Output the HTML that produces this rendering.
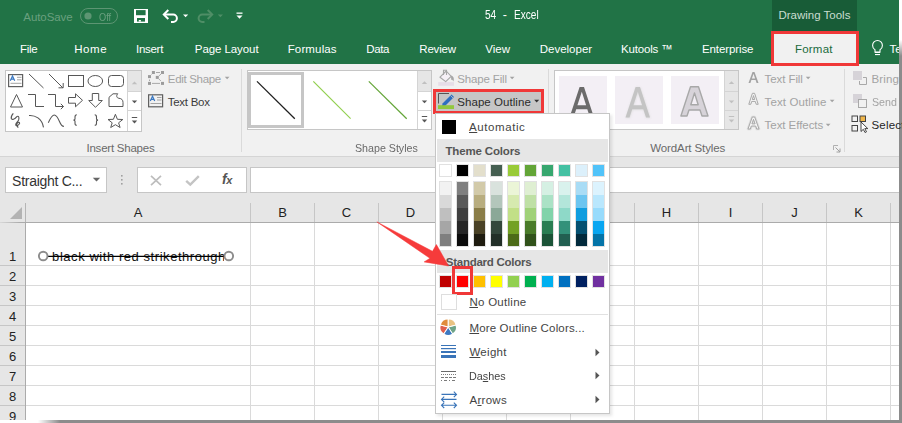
<!DOCTYPE html>
<html><head><meta charset="utf-8"><style>
html,body{margin:0;padding:0;width:902px;height:423px;overflow:hidden;background:#fff}
body{position:relative;font-family:"Liberation Sans",sans-serif}
.t{position:absolute;white-space:nowrap}
svg{overflow:visible}
</style></head><body>
<div style="position:absolute;left:0px;top:0px;width:902px;height:64px;background:#217346"></div>
<div style="position:absolute;left:0px;top:64px;width:899px;height:92px;background:#f1f1f1"></div>
<div style="position:absolute;left:772px;top:0px;width:85px;height:31px;background:#185c37"></div>
<div class="t" style="left:23.30px;top:12.00px;font-size:11.5px;line-height:11.5px;color:#6aa07f;letter-spacing:-0.071px;font-weight:400;">AutoSave</div>
<svg style="position:absolute;left:80px;top:8px;" width="38" height="16" viewBox="0 0 38 16"><rect x="0.5" y="0.5" width="37" height="15" rx="7.5" fill="none" stroke="#5d9573" stroke-width="1"/><circle cx="8" cy="8" r="3.6" fill="#5d9573"/></svg>
<div class="t" style="left:99.00px;top:12.00px;font-size:11.5px;line-height:11.5px;color:#6aa07f;letter-spacing:0.000px;font-weight:400;transform:scaleX(0.8000);transform-origin:0.00px 0;">Off</div>
<svg style="position:absolute;left:134px;top:9px;" width="14" height="14" viewBox="0 0 14 14"><rect x="0" y="0" width="14" height="14" fill="#fff"/><rect x="2" y="1.1" width="9.6" height="5.1" fill="#217346"/><rect x="3" y="9" width="8" height="3.6" fill="#217346"/><rect x="4.8" y="11" width="2.1" height="1.6" fill="#fff"/></svg>
<svg style="position:absolute;left:160px;top:7px;" width="32" height="17" viewBox="0 0 32 17"><path d="M4.5 7.5H13.2A3.7 3.7 0 0 1 13.2 14.9H11" fill="none" stroke="#fff" stroke-width="2"/><path d="M8.3 3L3.8 7.5L8.3 12" fill="none" stroke="#fff" stroke-width="2"/><path d="M23 7.4H28.2L25.6 10.3Z" fill="#fff"/></svg>
<svg style="position:absolute;left:196px;top:7px;" width="30" height="17" viewBox="0 0 30 17"><path d="M15.5 7.5H6.3A3.7 3.7 0 0 0 6.3 14.9H8.5" fill="none" stroke="#4f8e66" stroke-width="2"/><path d="M11.7 3L16.2 7.5L11.7 12" fill="none" stroke="#4f8e66" stroke-width="2"/><path d="M21.8 7.4H27L24.4 10.3Z" fill="#4f8e66"/></svg>
<svg style="position:absolute;left:236px;top:12px;" width="8" height="8" viewBox="0 0 8 8"><rect x="0.5" y="0.5" width="6" height="1.3" fill="#fff"/><path d="M0.5 3.5H6.5L3.5 6.8Z" fill="#fff"/></svg>
<div class="t" style="left:484.80px;top:9.00px;font-size:12.5px;line-height:12.5px;color:#ffffff;letter-spacing:0.000px;font-weight:400;transform:scaleX(0.8071);transform-origin:0.00px 0;">54</div>
<div class="t" style="left:502.70px;top:9.00px;font-size:12.5px;line-height:12.5px;color:#ffffff;letter-spacing:0.000px;font-weight:400;">-</div>
<div class="t" style="left:513.70px;top:9.00px;font-size:12.5px;line-height:12.5px;color:#ffffff;letter-spacing:0.000px;font-weight:400;transform:scaleX(0.8065);transform-origin:0.00px 0;">Excel</div>
<div class="t" style="left:778.40px;top:10.00px;font-size:11.5px;line-height:11.5px;color:#c9ddd0;letter-spacing:0.000px;font-weight:400;">Drawing Tools</div>
<div class="t" style="left:20.00px;top:44.00px;font-size:11.5px;line-height:11.5px;color:#ffffff;letter-spacing:-0.267px;font-weight:400;">File</div>
<div class="t" style="left:74.20px;top:44.00px;font-size:11.5px;line-height:11.5px;color:#ffffff;letter-spacing:0.600px;font-weight:400;">Home</div>
<div class="t" style="left:136.00px;top:44.00px;font-size:11.5px;line-height:11.5px;color:#ffffff;letter-spacing:-0.280px;font-weight:400;">Insert</div>
<div class="t" style="left:194.80px;top:44.00px;font-size:11.5px;line-height:11.5px;color:#ffffff;letter-spacing:-0.080px;font-weight:400;">Page Layout</div>
<div class="t" style="left:287.70px;top:44.00px;font-size:11.5px;line-height:11.5px;color:#ffffff;letter-spacing:0.143px;font-weight:400;">Formulas</div>
<div class="t" style="left:366.30px;top:44.00px;font-size:11.5px;line-height:11.5px;color:#ffffff;letter-spacing:-0.433px;font-weight:400;">Data</div>
<div class="t" style="left:419.30px;top:44.00px;font-size:11.5px;line-height:11.5px;color:#ffffff;letter-spacing:-0.200px;font-weight:400;">Review</div>
<div class="t" style="left:485.30px;top:44.00px;font-size:11.5px;line-height:11.5px;color:#ffffff;letter-spacing:0.000px;font-weight:400;">View</div>
<div class="t" style="left:539.70px;top:44.00px;font-size:11.5px;line-height:11.5px;color:#ffffff;letter-spacing:0.000px;font-weight:400;">Developer</div>
<div class="t" style="left:621.00px;top:44.00px;font-size:11.5px;line-height:11.5px;color:#ffffff;letter-spacing:-0.175px;font-weight:400;">Kutools&nbsp;™</div>
<div class="t" style="left:702.00px;top:44.00px;font-size:11.5px;line-height:11.5px;color:#ffffff;letter-spacing:-0.111px;font-weight:400;">Enterprise</div>
<div style="position:absolute;left:772px;top:31px;width:85px;height:34px;background:#f1f1f1"></div>
<div style="position:absolute;left:771px;top:31px;width:88px;height:35px;box-sizing:border-box;border:3px solid #f03838"></div>
<div class="t" style="left:795.00px;top:44.00px;font-size:11.5px;line-height:11.5px;color:#1a6b3d;letter-spacing:0.200px;font-weight:400;">Format</div>
<svg style="position:absolute;left:872px;top:40px;" width="11" height="16" viewBox="0 0 11 16"><path d="M3 9.8C1.2 8.6 0.6 7 0.6 5.4A4.9 4.9 0 0 1 10.4 5.4C10.4 7 9.8 8.6 8 9.8V12.3H3Z" fill="none" stroke="#fff" stroke-width="1.1" stroke-linejoin="round"/><rect x="3" y="11.6" width="5" height="1.4" fill="#fff"/><rect x="3" y="14" width="5" height="1.1" fill="#fff"/></svg>
<div class="t" style="left:889.60px;top:44.00px;font-size:11.5px;line-height:11.5px;color:#ffffff;letter-spacing:0.000px;font-weight:400;">Te</div>
<div style="position:absolute;left:0px;top:156px;width:899px;height:1px;background:#d5d5d5"></div>
<div style="position:absolute;left:899px;top:0px;width:3px;height:423px;background:linear-gradient(180deg,#ffffff 0px,#ffffff 40px,#8c8c8c 56px,#8c8c8c 100%)"></div>
<div style="position:absolute;left:5px;top:70px;width:137px;height:62px;box-sizing:border-box;border:1px solid #c6c6c6;background:#fff"></div>
<div style="position:absolute;left:127px;top:71px;width:1px;height:60px;background:#d4d4d4"></div>
<div style="position:absolute;left:128px;top:71px;width:13px;height:20px;background:#e6e6e6"></div>
<div style="position:absolute;left:128px;top:91px;width:13px;height:1px;background:#d4d4d4"></div>
<div style="position:absolute;left:128px;top:110px;width:13px;height:1px;background:#d4d4d4"></div>
<svg style="position:absolute;left:128px;top:71px;" width="13" height="60" viewBox="0 0 13 60"><path d="M3.8 13.2H9.2L6.5 10.4Z" fill="#c0c0c0"/><path d="M3.8 99.5H9.2L6.5 102.3Z" transform="translate(0,-70)" fill="#575757"/><rect x="3.8" y="46" width="5.4" height="1" fill="#575757"/><path d="M3.8 49.5H9.2L6.5 52.5Z" fill="#575757"/></svg>
<svg style="position:absolute;left:0px;top:0px;" width="130" height="140" viewBox="0 0 130 140">
<rect x="8.6" y="74.6" width="14" height="12" fill="none" stroke="#606060" stroke-width="1.2"/>
<path d="M17 77.3h4.5M17 79.8h4.5M10.5 83.3h11" stroke="#9a9a9a" stroke-width="0.9"/>
<path d="M10.3 80.8L12.5 76L14.7 80.8M11.1 79.1h2.8" stroke="#3a78c2" stroke-width="1.2" fill="none"/>
<path d="M29 74L43.5 88" stroke="#575757"/>
<path d="M49 74L63 88M58.5 87.8H63.2V83" stroke="#575757" fill="none"/>
<rect x="68.5" y="75.5" width="15" height="11" fill="none" stroke="#575757"/>
<ellipse cx="95.3" cy="81" rx="7.3" ry="5.5" fill="none" stroke="#575757"/>
<rect x="108.5" y="75.5" width="15" height="11" rx="3" fill="none" stroke="#575757"/>
<path d="M10.5 107H22.5L16.5 94.5Z" fill="none" stroke="#575757" stroke-linejoin="miter"/>
<path d="M28 94.5H35.5V106.5H44" fill="none" stroke="#575757"/>
<path d="M48 94.5H55.5V106.5H63.5M60.8 103.8L63.5 106.5L60.8 109.2" fill="none" stroke="#575757"/>
<path d="M68.5 97.5H75.5V93.8L82.5 100.3L75.5 106.8V103.2H68.5Z" fill="none" stroke="#575757" stroke-linejoin="round"/>
<path d="M92.3 93.5H98.7V100.5H102.3L95.5 107.3L88.7 100.5H92.3Z" fill="none" stroke="#575757" stroke-linejoin="round"/>
<path d="M109 106.5V97.3L113 93.8H117.8C116 95.5 116.5 98 119 98.3C121.5 98.5 123 99.8 123 102.5V106.5Z" fill="none" stroke="#575757" stroke-linejoin="round"/>
<path d="M13.3 113.3C12 114.8 10.8 116.8 11.3 118.6C11.8 120 14.8 119.5 16.8 116.6C18.2 115.6 19.6 117 18.6 120C17.8 122 15.8 123 15.7 124.8C15.8 126.2 18.2 126.2 19.6 123.6C19.8 122.3 18.6 121.8 17.4 123C16.2 124.5 17.2 126.5 18.3 127.7" fill="none" stroke="#575757" stroke-width="1.1"/>
<path d="M29 115.5C35 115 42 118.5 43.5 127.3" fill="none" stroke="#575757" stroke-width="1.1"/>
<path d="M48.3 122.7C50 119 52 115 54.3 115C56.8 115 58 118 59.6 121.8C60.8 124.8 61.8 126.4 63.9 126.4" fill="none" stroke="#575757" stroke-width="1.1"/>
<path d="M76.8 114.8C75 114.8 75 115.5 75 117V119C75 119.8 74.5 120 73.5 120.1C74.5 120.2 75 120.4 75 121.2V123.2C75 124.6 75 125.3 76.8 125.3" fill="none" stroke="#575757" stroke-width="1.1"/>
<path d="M94.7 114.8C96.5 114.8 96.5 115.5 96.5 117V119C96.5 119.8 97 120 98 120.1C97 120.2 96.5 120.4 96.5 121.2V123.2C96.5 124.6 96.5 125.3 94.7 125.3" fill="none" stroke="#575757" stroke-width="1.1"/>
<path d="M115.4 114.3L117.4 119.3L122.8 119.5L118.6 122.8L120.1 127.5L115.4 124.7L110.7 127.5L112.2 122.8L108 119.5L113.4 119.3Z" fill="none" stroke="#575757" stroke-linejoin="round"/>
</svg>
<svg style="position:absolute;left:0px;top:0px;" width="170" height="90" viewBox="0 0 170 90"><rect x="151.90" y="71.00" width="3.0" height="3.0" fill="#9c9c9c"/><rect x="161.00" y="71.00" width="3.0" height="3.0" fill="#9c9c9c"/><rect x="148.00" y="75.10" width="3.0" height="3.0" fill="#9c9c9c"/><rect x="155.80" y="75.90" width="3.0" height="3.0" fill="#9c9c9c"/><rect x="148.00" y="81.90" width="3.0" height="3.0" fill="#9c9c9c"/><rect x="161.00" y="81.90" width="3.0" height="3.0" fill="#9c9c9c"/><path d="M151.5 74.5L152 74M156 72.5H160M149.5 79.5V81M152 83.4H160M161 74L158.8 76M158.8 78.9L160.8 80.9" stroke="#a8a8a8" stroke-width="1" fill="none"/></svg>
<div class="t" style="left:167.80px;top:74.00px;font-size:11.5px;line-height:11.5px;color:#a3a3a3;letter-spacing:-0.311px;font-weight:400;">Edit Shape</div>
<svg style="position:absolute;left:224px;top:76px;" width="7" height="4" viewBox="0 0 7 4"><path d="M0.8 0.8H5.5L3.15 3.3Z" fill="#a3a3a3"/></svg>
<svg style="position:absolute;left:147px;top:94px;" width="17" height="14" viewBox="0 0 17 14"><rect x="1.6" y="0.8" width="14" height="12" fill="none" stroke="#606060" stroke-width="1.2"/><path d="M10 3.5h4.5M10 6h4.5M3.5 9.5h11" stroke="#9a9a9a" stroke-width="0.9"/><path d="M3.3 7L5.5 2.2L7.7 7M4.1 5.3h2.8" stroke="#3a78c2" stroke-width="1.2" fill="none"/></svg>
<div class="t" style="left:167.80px;top:97.00px;font-size:11.5px;line-height:11.5px;color:#3b3b3b;letter-spacing:-0.286px;font-weight:400;">Text Box</div>
<div class="t" style="left:86.50px;top:143.00px;font-size:11.5px;line-height:11.5px;color:#6a6a6a;letter-spacing:-0.233px;font-weight:400;">Insert Shapes</div>
<div style="position:absolute;left:241px;top:69px;width:1px;height:83px;background:#dadada"></div>
<div style="position:absolute;left:247px;top:70px;width:185px;height:60px;box-sizing:border-box;border:1px solid #c6c6c6;background:#fff"></div>
<div style="position:absolute;left:417px;top:71px;width:1px;height:58px;background:#d4d4d4"></div>
<div style="position:absolute;left:418px;top:71px;width:13px;height:20px;background:#e6e6e6"></div>
<div style="position:absolute;left:418px;top:91px;width:13px;height:1px;background:#d4d4d4"></div>
<div style="position:absolute;left:418px;top:110px;width:13px;height:1px;background:#d4d4d4"></div>
<svg style="position:absolute;left:418px;top:71px;" width="13" height="58" viewBox="0 0 13 58"><path d="M3.8 13H9.2L6.5 10.2Z" fill="#c0c0c0"/><path d="M3.8 29.5H9.2L6.5 32.3Z" fill="#575757"/><rect x="3.8" y="45" width="5.4" height="1" fill="#575757"/><path d="M3.8 48.5H9.2L6.5 51.5Z" fill="#575757"/></svg>
<div style="position:absolute;left:248px;top:72px;width:56px;height:56px;box-sizing:border-box;border:3.5px solid #c6c6c6;background:#fff"></div>
<svg style="position:absolute;left:247px;top:70px;" width="170" height="60" viewBox="0 0 170 60"><path d="M10 11.4L47.8 48.7" stroke="#1f1f1f" stroke-width="1.3"/><path d="M66.3 11.4L103.6 48.7" stroke="#92d050" stroke-width="1.2"/><path d="M121.8 11.4L159.7 48.7" stroke="#63a537" stroke-width="1.2"/></svg>
<div class="t" style="left:355.40px;top:143.00px;font-size:11.5px;line-height:11.5px;color:#6a6a6a;letter-spacing:0.000px;font-weight:400;transform:scaleX(0.9265);transform-origin:0.00px 0;">Shape Styles</div>
<svg style="position:absolute;left:0px;top:0px;" width="460" height="90" viewBox="0 0 460 90"><rect x="438.2" y="82.1" width="15.8" height="3.7" fill="#e6dee8"/><path d="M440 77.2L446.2 71L451.2 76.4L445.7 81.6Z" fill="#f5f0f6" stroke="#a6a6a6" stroke-width="1.1" stroke-linejoin="round"/><path d="M443.5 75V70.3H446.5V75" fill="none" stroke="#a6a6a6" stroke-width="1.1"/><path d="M451 75.5C453.5 76 454.5 78 453.5 81.5C452.8 80 451.8 79.5 451.2 80Z" fill="#a6a6a6"/></svg>
<div class="t" style="left:457.30px;top:74.00px;font-size:11.5px;line-height:11.5px;color:#a3a3a3;letter-spacing:-0.156px;font-weight:400;">Shape Fill</div>
<svg style="position:absolute;left:509px;top:76px;" width="7" height="4" viewBox="0 0 7 4"><path d="M0.8 0.8H5.5L3.15 3.3Z" fill="#a3a3a3"/></svg>
<div style="position:absolute;left:433px;top:89px;width:111px;height:25px;box-sizing:border-box;border:3px solid #f03838;background:#c6c6c6"></div>
<svg style="position:absolute;left:437px;top:92px;" width="20" height="19" viewBox="0 0 20 19"><path d="M1.5 11.5V1.5H12" fill="none" stroke="#555" stroke-width="1"/><path d="M5.5 11.5L14.5 2.5L17 5L8 14L5 14.5Z" fill="#2f6fbf"/><path d="M13.5 3.5L16 6" stroke="#c6c6c6" stroke-width="0.8"/><rect x="1" y="13.2" width="16" height="3.8" fill="#92c83e"/></svg>
<div class="t" style="left:457.30px;top:97.00px;font-size:11.5px;line-height:11.5px;color:#2b2b2b;letter-spacing:0.050px;font-weight:400;">Shape Outline</div>
<svg style="position:absolute;left:533px;top:99px;" width="8" height="5" viewBox="0 0 8 5"><path d="M1.2 0.8H6.2L3.7 3.6Z" fill="#333"/></svg>
<div style="position:absolute;left:548px;top:69px;width:1px;height:83px;background:#dadada"></div>
<div style="position:absolute;left:554px;top:70px;width:185px;height:60px;box-sizing:border-box;border:1px solid #c6c6c6;background:#fff"></div>
<div style="position:absolute;left:724px;top:71px;width:1px;height:58px;background:#d4d4d4"></div>
<div style="position:absolute;left:725px;top:71px;width:13px;height:58px;background:#e6e6e6"></div>
<div style="position:absolute;left:725px;top:91px;width:13px;height:1px;background:#d4d4d4"></div>
<div style="position:absolute;left:725px;top:110px;width:13px;height:1px;background:#d4d4d4"></div>
<svg style="position:absolute;left:725px;top:71px;" width="13" height="58" viewBox="0 0 13 58"><path d="M3.8 13H9.2L6.5 10.2Z" fill="#c0c0c0"/><path d="M3.8 29.5H9.2L6.5 32.3Z" fill="#c0c0c0"/><rect x="3.8" y="45" width="5.4" height="1" fill="#c0c0c0"/><path d="M3.8 48.5H9.2L6.5 51.5Z" fill="#c0c0c0"/></svg>
<div style="position:absolute;left:559px;top:76px;width:48px;height:48px;background:#f3eff5"></div>
<div style="position:absolute;left:615px;top:76px;width:48px;height:48px;background:#f3eff5"></div>
<div style="position:absolute;left:671px;top:76px;width:48px;height:48px;background:#f3eff5"></div>
<svg style="position:absolute;left:559px;top:76px" width="48" height="48" viewBox="0 0 48 48"><path d="M10.5 41.5L20.6 11H25L35 41.5H31L28.3 33.2H17.2L14.5 41.5Z M18.4 29.3H27.1L22.8 15.8Z" fill="#6b6b6b" fill-rule="evenodd"/></svg>
<svg style="position:absolute;left:615px;top:76px" width="48" height="48" viewBox="0 0 48 48"><path d="M10.5 41.5L20.6 11H25L35 41.5H31L28.3 33.2H17.2L14.5 41.5Z M18.4 29.3H27.1L22.8 15.8Z" transform="translate(0.3,0.6)" fill="#dcdcdc" fill-rule="evenodd" style="filter:blur(1px)"/><path d="M10.5 41.5L20.6 11H25L35 41.5H31L28.3 33.2H17.2L14.5 41.5Z M18.4 29.3H27.1L22.8 15.8Z" fill="#c4c4c4" fill-rule="evenodd"/></svg>
<svg style="position:absolute;left:671px;top:76px" width="48" height="48" viewBox="0 0 48 48"><path d="M9.9 40L19.5 10.8H27.5L37 40H31L29 34H18L16 40Z M19.8 28.8H27.2L23.5 17Z" fill="#d7d3d9" fill-rule="evenodd" stroke="#a8a8a8" stroke-width="1.4" stroke-linejoin="round"/></svg>
<svg style="position:absolute;left:747px;top:71px;" width="13" height="13" viewBox="0 0 13 13"><path d="M1.5 12L5.5 1H7.5L11.5 12H9.6L8.6 9H4.4L3.4 12Z M4.9 7.4H8.1L6.5 2.8Z" fill="#a3a3a3" fill-rule="evenodd"/></svg>
<div class="t" style="left:764.60px;top:74.00px;font-size:11.5px;line-height:11.5px;color:#a3a3a3;letter-spacing:-0.088px;font-weight:400;">Text Fill</div>
<svg style="position:absolute;left:805px;top:76px;" width="7" height="4" viewBox="0 0 7 4"><path d="M0.8 0.8H5.5L3.15 3.3Z" fill="#a3a3a3"/></svg>
<svg style="position:absolute;left:747px;top:92px;" width="13" height="14" viewBox="0 0 13 14"><path d="M1.8 12.3L5.4 1.3H7.6L11.2 12.3H9.2L8.3 9.4H4.7L3.8 12.3Z M5.3 7.5H7.7L6.5 3.6Z" fill="#f7f7f7" stroke="#a8a8a8" stroke-width="1" stroke-linejoin="round"/></svg>
<div class="t" style="left:764.60px;top:97.00px;font-size:11.5px;line-height:11.5px;color:#a3a3a3;letter-spacing:0.109px;font-weight:400;">Text Outline</div>
<svg style="position:absolute;left:829px;top:99px;" width="7" height="4" viewBox="0 0 7 4"><path d="M0.8 0.8H5.5L3.15 3.3Z" fill="#a3a3a3"/></svg>
<svg style="position:absolute;left:746px;top:115px;" width="15" height="16" viewBox="0 0 15 16"><path d="M2 14L6.3 2H8.7L13 14H10.7L9.7 11H5.3L4.3 14Z M5.9 8.9H9.1L7.5 4.3Z" fill="none" stroke="#dcdcdc" stroke-width="2.6" stroke-linejoin="round" style="filter:blur(0.6px)"/><path d="M2 14L6.3 2H8.7L13 14H10.7L9.7 11H5.3L4.3 14Z M5.9 8.9H9.1L7.5 4.3Z" fill="#f7f7f7" stroke="#a8a8a8" stroke-width="1" stroke-linejoin="round"/></svg>
<div class="t" style="left:764.60px;top:120.00px;font-size:11.5px;line-height:11.5px;color:#a3a3a3;letter-spacing:-0.055px;font-weight:400;">Text Effects</div>
<svg style="position:absolute;left:825px;top:123px;" width="7" height="4" viewBox="0 0 7 4"><path d="M0.8 0.8H5.5L3.15 3.3Z" fill="#a3a3a3"/></svg>
<div class="t" style="left:650.20px;top:143.00px;font-size:11.5px;line-height:11.5px;color:#6a6a6a;letter-spacing:-0.100px;font-weight:400;">WordArt Styles</div>
<svg style="position:absolute;left:833px;top:145px;" width="8" height="8" viewBox="0 0 8 8"><path d="M0.5 0.5H5M0.5 0.5V5" stroke="#b0b0b0" fill="none"/><path d="M2.5 2.5L7 7M7 3.5V7H3.5" stroke="#a0a0a0" fill="none"/></svg>
<div style="position:absolute;left:844px;top:69px;width:1px;height:83px;background:#dadada"></div>
<svg style="position:absolute;left:852px;top:70px;" width="16" height="17" viewBox="0 0 16 17"><rect x="1" y="1" width="9" height="9" fill="#d6d3d8"/><path d="M11 7.5H14.5V14.5H7.5V11" fill="none" stroke="#a8a8a8"/></svg>
<div class="t" style="left:871.50px;top:74.00px;font-size:11.5px;line-height:11.5px;color:#a3a3a3;letter-spacing:0.125px;font-weight:400;">Bring</div>
<svg style="position:absolute;left:852px;top:93px;" width="16" height="16" viewBox="0 0 16 16"><rect x="1" y="1" width="9" height="9" fill="#d6d3d8"/><rect x="6.5" y="6.5" width="8" height="8" fill="#f1f1f1" stroke="#a8a8a8"/></svg>
<div class="t" style="left:871.50px;top:97.00px;font-size:11.5px;line-height:11.5px;color:#a3a3a3;letter-spacing:0.000px;font-weight:400;transform:scaleX(0.9259);transform-origin:0.00px 0;">Send</div>
<svg style="position:absolute;left:851px;top:115px;" width="18" height="18" viewBox="0 0 18 18"><rect x="1" y="1" width="5.5" height="5.5" fill="none" stroke="#444"/><rect x="1" y="10.5" width="5.5" height="5.5" fill="none" stroke="#444"/><rect x="9" y="1" width="5.5" height="5.5" fill="#f0b64a" stroke="#444"/><path d="M10 7V16.5L12.3 14.3L14 17.5L15.5 16.8L13.8 13.6H16.8Z" fill="#fff" stroke="#333" stroke-width="0.9" stroke-linejoin="round"/></svg>
<div class="t" style="left:871.50px;top:120.00px;font-size:11.5px;line-height:11.5px;color:#262626;letter-spacing:0.200px;font-weight:400;">Select</div>
<div style="position:absolute;left:0px;top:157px;width:899px;height:46px;background:#e6e6e6"></div>
<div style="position:absolute;left:5px;top:167px;width:102px;height:26px;box-sizing:border-box;border:1px solid #c6c6c6;background:#fff"></div>
<div class="t" style="left:12.10px;top:174.00px;font-size:14px;line-height:14px;color:#333333;letter-spacing:-0.283px;font-weight:400;">Straight C...</div>
<svg style="position:absolute;left:92px;top:177px;" width="9" height="6" viewBox="0 0 9 6"><path d="M0.8 0.8H8.2L4.5 4.6Z" fill="#666"/></svg>
<svg style="position:absolute;left:120px;top:174px;" width="4" height="12" viewBox="0 0 4 12"><rect x="1" y="1" width="1.6" height="1.6" fill="#a0a0a0"/><rect x="1" y="5" width="1.6" height="1.6" fill="#a0a0a0"/><rect x="1" y="9" width="1.6" height="1.6" fill="#a0a0a0"/></svg>
<div style="position:absolute;left:137px;top:167px;width:110px;height:26px;box-sizing:border-box;border:1px solid #c6c6c6;background:#fff"></div>
<svg style="position:absolute;left:150px;top:175px;" width="12" height="11" viewBox="0 0 12 11"><path d="M1 0.8L11 10.2M11 0.8L1 10.2" stroke="#bdbdbd" stroke-width="1.7"/></svg>
<svg style="position:absolute;left:185px;top:175px;" width="15" height="11" viewBox="0 0 15 11"><path d="M1.2 5.8L5.3 9.6L13.8 1.2" fill="none" stroke="#c4c4c4" stroke-width="2.4"/></svg>
<div class="t" style="left:222.00px;top:172.00px;font-size:14px;line-height:14px;color:#555;letter-spacing:0.000px;font-weight:700;font-family:"Liberation Serif",serif;"><i>f</i><span style="font-size:11px;font-style:italic;margin-left:-0.5px">x</span></div>
<div style="position:absolute;left:250px;top:167px;width:649px;height:26px;box-sizing:border-box;border:1px solid #c6c6c6;border-right:none;background:#fff"></div>
<div style="position:absolute;left:0px;top:203px;width:899px;height:217px;background:#fff"></div>
<div style="position:absolute;left:0px;top:203px;width:899px;height:19px;background:#e6e6e6"></div>
<div style="position:absolute;left:0px;top:222px;width:26px;height:198px;background:#e6e6e6"></div>
<div style="position:absolute;left:0px;top:222px;width:899px;height:1px;background:linear-gradient(90deg,#d8d8d8 0px,#ababab 20px,#ababab 100%)"></div>
<div style="position:absolute;left:25px;top:203px;width:1px;height:19px;background:#b5b5b5"></div>
<div style="position:absolute;left:25px;top:222px;width:1px;height:198px;background:#ababab"></div>
<svg style="position:absolute;left:9px;top:206px;" width="14" height="14" viewBox="0 0 14 14"><path d="M13 1V13H1Z" fill="#b3b3b3"/></svg>
<div style="position:absolute;left:250px;top:203px;width:1px;height:19px;background:#c6c6c6"></div>
<div style="position:absolute;left:250px;top:223px;width:1px;height:197px;background:#dadada"></div>
<div class="t" style="left:26px;top:206px;width:224px;text-align:center;font-size:13px;line-height:13px;color:#222">A</div>
<div style="position:absolute;left:314px;top:203px;width:1px;height:19px;background:#c6c6c6"></div>
<div style="position:absolute;left:314px;top:223px;width:1px;height:197px;background:#dadada"></div>
<div class="t" style="left:251px;top:206px;width:63px;text-align:center;font-size:13px;line-height:13px;color:#222">B</div>
<div style="position:absolute;left:378px;top:203px;width:1px;height:19px;background:#c6c6c6"></div>
<div style="position:absolute;left:378px;top:223px;width:1px;height:197px;background:#dadada"></div>
<div class="t" style="left:315px;top:206px;width:63px;text-align:center;font-size:13px;line-height:13px;color:#222">C</div>
<div style="position:absolute;left:442px;top:203px;width:1px;height:19px;background:#c6c6c6"></div>
<div style="position:absolute;left:442px;top:223px;width:1px;height:197px;background:#dadada"></div>
<div class="t" style="left:379px;top:206px;width:63px;text-align:center;font-size:13px;line-height:13px;color:#222">D</div>
<div style="position:absolute;left:506px;top:203px;width:1px;height:19px;background:#c6c6c6"></div>
<div style="position:absolute;left:506px;top:223px;width:1px;height:197px;background:#dadada"></div>
<div class="t" style="left:443px;top:206px;width:63px;text-align:center;font-size:13px;line-height:13px;color:#222">E</div>
<div style="position:absolute;left:570px;top:203px;width:1px;height:19px;background:#c6c6c6"></div>
<div style="position:absolute;left:570px;top:223px;width:1px;height:197px;background:#dadada"></div>
<div class="t" style="left:507px;top:206px;width:63px;text-align:center;font-size:13px;line-height:13px;color:#222">F</div>
<div style="position:absolute;left:634px;top:203px;width:1px;height:19px;background:#c6c6c6"></div>
<div style="position:absolute;left:634px;top:223px;width:1px;height:197px;background:#dadada"></div>
<div class="t" style="left:571px;top:206px;width:63px;text-align:center;font-size:13px;line-height:13px;color:#222">G</div>
<div style="position:absolute;left:698px;top:203px;width:1px;height:19px;background:#c6c6c6"></div>
<div style="position:absolute;left:698px;top:223px;width:1px;height:197px;background:#dadada"></div>
<div class="t" style="left:635px;top:206px;width:63px;text-align:center;font-size:13px;line-height:13px;color:#222">H</div>
<div style="position:absolute;left:762px;top:203px;width:1px;height:19px;background:#c6c6c6"></div>
<div style="position:absolute;left:762px;top:223px;width:1px;height:197px;background:#dadada"></div>
<div class="t" style="left:699px;top:206px;width:63px;text-align:center;font-size:13px;line-height:13px;color:#222">I</div>
<div style="position:absolute;left:826px;top:203px;width:1px;height:19px;background:#c6c6c6"></div>
<div style="position:absolute;left:826px;top:223px;width:1px;height:197px;background:#dadada"></div>
<div class="t" style="left:763px;top:206px;width:63px;text-align:center;font-size:13px;line-height:13px;color:#222">J</div>
<div style="position:absolute;left:890px;top:203px;width:1px;height:19px;background:#c6c6c6"></div>
<div style="position:absolute;left:890px;top:223px;width:1px;height:197px;background:#dadada"></div>
<div class="t" style="left:827px;top:206px;width:63px;text-align:center;font-size:13px;line-height:13px;color:#222">K</div>
<div style="position:absolute;left:26px;top:265px;width:873px;height:1px;background:#dadada"></div>
<div style="position:absolute;left:0px;top:265px;width:25px;height:1px;background:#c6c6c6"></div>
<div style="position:absolute;left:26px;top:285px;width:873px;height:1px;background:#dadada"></div>
<div style="position:absolute;left:0px;top:285px;width:25px;height:1px;background:#c6c6c6"></div>
<div style="position:absolute;left:26px;top:305px;width:873px;height:1px;background:#dadada"></div>
<div style="position:absolute;left:0px;top:305px;width:25px;height:1px;background:#c6c6c6"></div>
<div style="position:absolute;left:26px;top:325px;width:873px;height:1px;background:#dadada"></div>
<div style="position:absolute;left:0px;top:325px;width:25px;height:1px;background:#c6c6c6"></div>
<div style="position:absolute;left:26px;top:345px;width:873px;height:1px;background:#dadada"></div>
<div style="position:absolute;left:0px;top:345px;width:25px;height:1px;background:#c6c6c6"></div>
<div style="position:absolute;left:26px;top:365px;width:873px;height:1px;background:#dadada"></div>
<div style="position:absolute;left:0px;top:365px;width:25px;height:1px;background:#c6c6c6"></div>
<div style="position:absolute;left:26px;top:385px;width:873px;height:1px;background:#dadada"></div>
<div style="position:absolute;left:0px;top:385px;width:25px;height:1px;background:#c6c6c6"></div>
<div style="position:absolute;left:26px;top:405px;width:873px;height:1px;background:#dadada"></div>
<div style="position:absolute;left:0px;top:405px;width:25px;height:1px;background:#c6c6c6"></div>
<div class="t" style="left:0px;top:250px;width:25px;text-align:center;font-size:13px;line-height:13px;color:#222">1</div>
<div class="t" style="left:0px;top:270px;width:25px;text-align:center;font-size:13px;line-height:13px;color:#222">2</div>
<div class="t" style="left:0px;top:290px;width:25px;text-align:center;font-size:13px;line-height:13px;color:#222">3</div>
<div class="t" style="left:0px;top:310px;width:25px;text-align:center;font-size:13px;line-height:13px;color:#222">4</div>
<div class="t" style="left:0px;top:330px;width:25px;text-align:center;font-size:13px;line-height:13px;color:#222">5</div>
<div class="t" style="left:0px;top:350px;width:25px;text-align:center;font-size:13px;line-height:13px;color:#222">6</div>
<div class="t" style="left:0px;top:370px;width:25px;text-align:center;font-size:13px;line-height:13px;color:#222">7</div>
<div class="t" style="left:0px;top:390px;width:25px;text-align:center;font-size:13px;line-height:13px;color:#222">8</div>
<div class="t" style="left:0px;top:410px;width:25px;text-align:center;font-size:13px;line-height:13px;color:#222">9</div>
<div style="position:absolute;left:0px;top:420px;width:899px;height:3px;background:linear-gradient(90deg,#ffffff 0px,#ffffff 38px,#8c8c8c 60px,#8c8c8c 100%)"></div>
<div class="t" style="left:48px;top:244px;width:176px;height:22px;overflow:hidden">
<div class="t" style="left:4.10px;top:6.00px;font-size:13px;line-height:13px;color:#111111;letter-spacing:0.556px;font-weight:400;">black with red strikethrough</div>
</div>
<svg style="position:absolute;left:36px;top:249px;" width="200" height="14" viewBox="0 0 200 14"><path d="M12 7.4H188" stroke="#000" stroke-width="1.4"/><circle cx="7.2" cy="7" r="4.3" fill="#fff" stroke="#8c8c8c" stroke-width="1.9"/><circle cx="192.8" cy="7" r="4.3" fill="#fff" stroke="#8c8c8c" stroke-width="1.9"/></svg>
<div style="position:absolute;left:437px;top:115px;width:175px;height:301px;background:rgba(0,0,0,0.10);filter:blur(1.5px)"></div>
<div style="position:absolute;left:435px;top:113px;width:175px;height:301px;box-sizing:border-box;border:1px solid #c6c6c6;background:#fff"></div>
<div style="position:absolute;left:442px;top:120px;width:14px;height:14px;background:#000"></div>
<div class="t" style="left:469.00px;top:122.00px;font-size:11.5px;line-height:11.5px;color:#444444;letter-spacing:0.588px;font-weight:400;"><span style="text-decoration:underline">A</span>utomatic</div>
<div style="position:absolute;left:437px;top:139px;width:171px;height:23px;background:#e6e6e6"></div>
<div class="t" style="left:445.50px;top:146.00px;font-size:11.5px;line-height:11.5px;color:#555555;letter-spacing:-0.164px;font-weight:700;">Theme Colors</div>
<div style="position:absolute;left:439px;top:164px;width:13px;height:13px;box-sizing:border-box;border:1px solid #e1e1e1;background:#ffffff"></div>
<div style="position:absolute;left:439px;top:181px;width:13px;height:66px;box-sizing:border-box;border:1px solid #e1e1e1;background:#fff"></div>
<div style="position:absolute;left:440px;top:182px;width:11px;height:13px;background:#f2f2f2"></div>
<div style="position:absolute;left:440px;top:195px;width:11px;height:13px;background:#d9d9d9"></div>
<div style="position:absolute;left:440px;top:208px;width:11px;height:13px;background:#bfbfbf"></div>
<div style="position:absolute;left:440px;top:221px;width:11px;height:13px;background:#a6a6a6"></div>
<div style="position:absolute;left:440px;top:234px;width:11px;height:12px;background:#7f7f7f"></div>
<div style="position:absolute;left:456px;top:164px;width:13px;height:13px;box-sizing:border-box;border:1px solid #e1e1e1;background:#000000"></div>
<div style="position:absolute;left:456px;top:181px;width:13px;height:66px;box-sizing:border-box;border:1px solid #e1e1e1;background:#fff"></div>
<div style="position:absolute;left:457px;top:182px;width:11px;height:13px;background:#7f7f7f"></div>
<div style="position:absolute;left:457px;top:195px;width:11px;height:13px;background:#595959"></div>
<div style="position:absolute;left:457px;top:208px;width:11px;height:13px;background:#3f3f3f"></div>
<div style="position:absolute;left:457px;top:221px;width:11px;height:13px;background:#262626"></div>
<div style="position:absolute;left:457px;top:234px;width:11px;height:12px;background:#0c0c0c"></div>
<div style="position:absolute;left:473px;top:164px;width:13px;height:13px;box-sizing:border-box;border:1px solid #e1e1e1;background:#e3dfcc"></div>
<div style="position:absolute;left:473px;top:181px;width:13px;height:66px;box-sizing:border-box;border:1px solid #e1e1e1;background:#fff"></div>
<div style="position:absolute;left:474px;top:182px;width:11px;height:13px;background:#d2caa9"></div>
<div style="position:absolute;left:474px;top:195px;width:11px;height:13px;background:#b8ad7f"></div>
<div style="position:absolute;left:474px;top:208px;width:11px;height:13px;background:#8a7d48"></div>
<div style="position:absolute;left:474px;top:221px;width:11px;height:13px;background:#4a4226"></div>
<div style="position:absolute;left:474px;top:234px;width:11px;height:12px;background:#1f1c10"></div>
<div style="position:absolute;left:490px;top:164px;width:13px;height:13px;box-sizing:border-box;border:1px solid #e1e1e1;background:#455f51"></div>
<div style="position:absolute;left:490px;top:181px;width:13px;height:66px;box-sizing:border-box;border:1px solid #e1e1e1;background:#fff"></div>
<div style="position:absolute;left:491px;top:182px;width:11px;height:13px;background:#d9e2dd"></div>
<div style="position:absolute;left:491px;top:195px;width:11px;height:13px;background:#b3c6bb"></div>
<div style="position:absolute;left:491px;top:208px;width:11px;height:13px;background:#8ba898"></div>
<div style="position:absolute;left:491px;top:221px;width:11px;height:13px;background:#33473c"></div>
<div style="position:absolute;left:491px;top:234px;width:11px;height:12px;background:#222f28"></div>
<div style="position:absolute;left:507px;top:164px;width:13px;height:13px;box-sizing:border-box;border:1px solid #e1e1e1;background:#99cb38"></div>
<div style="position:absolute;left:507px;top:181px;width:13px;height:66px;box-sizing:border-box;border:1px solid #e1e1e1;background:#fff"></div>
<div style="position:absolute;left:508px;top:182px;width:11px;height:13px;background:#ebf5d7"></div>
<div style="position:absolute;left:508px;top:195px;width:11px;height:13px;background:#d6eaaf"></div>
<div style="position:absolute;left:508px;top:208px;width:11px;height:13px;background:#c2e087"></div>
<div style="position:absolute;left:508px;top:221px;width:11px;height:13px;background:#73a125"></div>
<div style="position:absolute;left:508px;top:234px;width:11px;height:12px;background:#4c6b18"></div>
<div style="position:absolute;left:524px;top:164px;width:13px;height:13px;box-sizing:border-box;border:1px solid #e1e1e1;background:#63a537"></div>
<div style="position:absolute;left:524px;top:181px;width:13px;height:66px;box-sizing:border-box;border:1px solid #e1e1e1;background:#fff"></div>
<div style="position:absolute;left:525px;top:182px;width:11px;height:13px;background:#dfefd2"></div>
<div style="position:absolute;left:525px;top:195px;width:11px;height:13px;background:#bfe0a5"></div>
<div style="position:absolute;left:525px;top:208px;width:11px;height:13px;background:#a0d178"></div>
<div style="position:absolute;left:525px;top:221px;width:11px;height:13px;background:#4a7b29"></div>
<div style="position:absolute;left:525px;top:234px;width:11px;height:12px;background:#31521b"></div>
<div style="position:absolute;left:541px;top:164px;width:13px;height:13px;box-sizing:border-box;border:1px solid #e1e1e1;background:#37a76f"></div>
<div style="position:absolute;left:541px;top:181px;width:13px;height:66px;box-sizing:border-box;border:1px solid #e1e1e1;background:#fff"></div>
<div style="position:absolute;left:542px;top:182px;width:11px;height:13px;background:#d5f0e3"></div>
<div style="position:absolute;left:542px;top:195px;width:11px;height:13px;background:#abe2c6"></div>
<div style="position:absolute;left:542px;top:208px;width:11px;height:13px;background:#82d3aa"></div>
<div style="position:absolute;left:542px;top:221px;width:11px;height:13px;background:#297d52"></div>
<div style="position:absolute;left:542px;top:234px;width:11px;height:12px;background:#1b5337"></div>
<div style="position:absolute;left:558px;top:164px;width:13px;height:13px;box-sizing:border-box;border:1px solid #e1e1e1;background:#44c1a3"></div>
<div style="position:absolute;left:558px;top:181px;width:13px;height:66px;box-sizing:border-box;border:1px solid #e1e1e1;background:#fff"></div>
<div style="position:absolute;left:559px;top:182px;width:11px;height:13px;background:#d9f2ed"></div>
<div style="position:absolute;left:559px;top:195px;width:11px;height:13px;background:#b3e6da"></div>
<div style="position:absolute;left:559px;top:208px;width:11px;height:13px;background:#8ed9c8"></div>
<div style="position:absolute;left:559px;top:221px;width:11px;height:13px;background:#33917a"></div>
<div style="position:absolute;left:559px;top:234px;width:11px;height:12px;background:#225f51"></div>
<div style="position:absolute;left:575px;top:164px;width:13px;height:13px;box-sizing:border-box;border:1px solid #e1e1e1;background:#dcf0fb"></div>
<div style="position:absolute;left:575px;top:181px;width:13px;height:66px;box-sizing:border-box;border:1px solid #e1e1e1;background:#fff"></div>
<div style="position:absolute;left:576px;top:182px;width:11px;height:13px;background:#a9dcf5"></div>
<div style="position:absolute;left:576px;top:195px;width:11px;height:13px;background:#6cc5f0"></div>
<div style="position:absolute;left:576px;top:208px;width:11px;height:13px;background:#109ddf"></div>
<div style="position:absolute;left:576px;top:221px;width:11px;height:13px;background:#045071"></div>
<div style="position:absolute;left:576px;top:234px;width:11px;height:12px;background:#022a3c"></div>
<div style="position:absolute;left:592px;top:164px;width:13px;height:13px;box-sizing:border-box;border:1px solid #e1e1e1;background:#51c3f9"></div>
<div style="position:absolute;left:592px;top:181px;width:13px;height:66px;box-sizing:border-box;border:1px solid #e1e1e1;background:#fff"></div>
<div style="position:absolute;left:593px;top:182px;width:11px;height:13px;background:#dcf3fe"></div>
<div style="position:absolute;left:593px;top:195px;width:11px;height:13px;background:#b9e7fd"></div>
<div style="position:absolute;left:593px;top:208px;width:11px;height:13px;background:#97dbfc"></div>
<div style="position:absolute;left:593px;top:221px;width:11px;height:13px;background:#08a6f1"></div>
<div style="position:absolute;left:593px;top:234px;width:11px;height:12px;background:#0474a8"></div>
<div style="position:absolute;left:437px;top:250px;width:171px;height:23px;background:#e6e6e6"></div>
<div class="t" style="left:445.80px;top:257.00px;font-size:11.5px;line-height:11.5px;color:#555555;letter-spacing:-0.257px;font-weight:700;">Standard Colors</div>
<div style="position:absolute;left:439px;top:275px;width:13px;height:13px;box-sizing:border-box;border:1px solid #e1e1e1;background:#c00000"></div>
<div style="position:absolute;left:456px;top:275px;width:13px;height:13px;box-sizing:border-box;border:1px solid #e1e1e1;background:#ff0000"></div>
<div style="position:absolute;left:473px;top:275px;width:13px;height:13px;box-sizing:border-box;border:1px solid #e1e1e1;background:#ffc000"></div>
<div style="position:absolute;left:490px;top:275px;width:13px;height:13px;box-sizing:border-box;border:1px solid #e1e1e1;background:#ffff00"></div>
<div style="position:absolute;left:507px;top:275px;width:13px;height:13px;box-sizing:border-box;border:1px solid #e1e1e1;background:#92d050"></div>
<div style="position:absolute;left:524px;top:275px;width:13px;height:13px;box-sizing:border-box;border:1px solid #e1e1e1;background:#00b050"></div>
<div style="position:absolute;left:541px;top:275px;width:13px;height:13px;box-sizing:border-box;border:1px solid #e1e1e1;background:#00b0f0"></div>
<div style="position:absolute;left:558px;top:275px;width:13px;height:13px;box-sizing:border-box;border:1px solid #e1e1e1;background:#0070c0"></div>
<div style="position:absolute;left:575px;top:275px;width:13px;height:13px;box-sizing:border-box;border:1px solid #e1e1e1;background:#002060"></div>
<div style="position:absolute;left:592px;top:275px;width:13px;height:13px;box-sizing:border-box;border:1px solid #e1e1e1;background:#7030a0"></div>
<div style="position:absolute;left:452px;top:266px;width:21px;height:29px;box-sizing:border-box;border:3px solid #f03838"></div>
<div style="position:absolute;left:441px;top:294px;width:16px;height:16px;box-sizing:border-box;border:1px solid #dedede;background:#fff"></div>
<div class="t" style="left:469.40px;top:297.00px;font-size:11.5px;line-height:11.5px;color:#444444;letter-spacing:0.278px;font-weight:400;"><span style="text-decoration:underline">N</span>o Outline</div>
<div style="position:absolute;left:437px;top:314px;width:171px;height:1px;background:#e1e1e1"></div>
<svg style="position:absolute;left:440px;top:319px;" width="17" height="17" viewBox="0 0 17 17"><path d="M8.57 7.62L8.57 0.42A7.2 7.2 0 0 1 15.52 5.76Z" fill="#e9c282"/><path d="M8.76 8.32L15.71 6.45A7.2 7.2 0 0 1 12.68 14.35Z" fill="#6ea488"/><path d="M8.20 8.70L12.12 14.74A7.2 7.2 0 0 1 4.28 14.74Z" fill="#3d79c2"/><path d="M7.64 8.32L3.72 14.35A7.2 7.2 0 0 1 0.69 6.45Z" fill="#e0604e"/><path d="M7.83 7.62L0.88 5.76A7.2 7.2 0 0 1 7.83 0.42Z" fill="#e08c3c"/><path d="M8.2 8.1L8.20 -0.90" stroke="#fff" stroke-width="0.9"/><path d="M8.2 8.1L16.89 5.77" stroke="#fff" stroke-width="0.9"/><path d="M8.2 8.1L13.10 15.65" stroke="#fff" stroke-width="0.9"/><path d="M8.2 8.1L3.30 15.65" stroke="#fff" stroke-width="0.9"/><path d="M8.2 8.1L-0.49 5.77" stroke="#fff" stroke-width="0.9"/></svg>
<div class="t" style="left:469.40px;top:323.00px;font-size:11.5px;line-height:11.5px;color:#444444;letter-spacing:0.167px;font-weight:400;"><span style="text-decoration:underline">M</span>ore Outline Colors...</div>
<svg style="position:absolute;left:441px;top:344px;" width="16" height="16" viewBox="0 0 16 16"><rect x="0" y="1" width="15" height="1" fill="#3a74b8"/><rect x="0" y="4" width="15" height="1.2" fill="#3a74b8"/><rect x="0" y="7" width="15" height="2" fill="#3a74b8"/><rect x="0" y="11" width="15" height="3" fill="#3a74b8"/></svg>
<div class="t" style="left:469.40px;top:347.00px;font-size:11.5px;line-height:11.5px;color:#444444;letter-spacing:0.300px;font-weight:400;"><span style="text-decoration:underline">W</span>eight</div>
<svg style="position:absolute;left:441px;top:370px;" width="16" height="12" viewBox="0 0 16 12"><path d="M0 1.5H15" stroke="#6a6a6a" stroke-width="1"/><path d="M0 4.5H15" stroke="#7a7a7a" stroke-dasharray="1 1"/><path d="M0 7.5H15" stroke="#7a7a7a" stroke-dasharray="3 1"/><path d="M0 10.5H15" stroke="#7a7a7a" stroke-dasharray="1 2 3 2"/></svg>
<div class="t" style="left:469.40px;top:371.00px;font-size:11.5px;line-height:11.5px;color:#444444;letter-spacing:0.000px;font-weight:400;transform:scaleX(0.9385);transform-origin:0.00px 0;">Da<span style="text-decoration:underline">s</span>hes</div>
<svg style="position:absolute;left:440px;top:390px;" width="18" height="18" viewBox="0 0 18 18"><path d="M1.5 4.4H16.5M13.8 1.7L16.5 4.4L13.8 7.1" fill="none" stroke="#3a74b8" stroke-width="1.1"/><path d="M1.5 9.4H16.5M4.2 6.7L1.5 9.4L4.2 12.1" fill="none" stroke="#3a74b8" stroke-width="1.1"/><path d="M1.5 15.3H16.5M4.2 12.6L1.5 15.3L4.2 18M13.8 12.6L16.5 15.3L13.8 18" fill="none" stroke="#3a74b8" stroke-width="1.1"/></svg>
<div class="t" style="left:469.40px;top:395.00px;font-size:11.5px;line-height:11.5px;color:#444444;letter-spacing:0.300px;font-weight:400;">A<span style="text-decoration:underline">r</span>rows</div>
<svg style="position:absolute;left:594px;top:348px;" width="7" height="9" viewBox="0 0 7 9"><path d="M1.5 0.8L5.5 4.5L1.5 8.2Z" fill="#555"/></svg>
<svg style="position:absolute;left:594px;top:371px;" width="7" height="9" viewBox="0 0 7 9"><path d="M1.5 0.8L5.5 4.5L1.5 8.2Z" fill="#555"/></svg>
<svg style="position:absolute;left:594px;top:395px;" width="7" height="9" viewBox="0 0 7 9"><path d="M1.5 0.8L5.5 4.5L1.5 8.2Z" fill="#555"/></svg>
<svg style="position:absolute;left:370px;top:215px;" width="90" height="60" viewBox="0 0 90 60"><path d="M6.9 6.9L62.5 36.3L66.4 29.5L78.6 51L54.1 46.9L59.9 43.3Z" fill="#f63b3b" stroke="#f63b3b" stroke-width="0.5" stroke-linejoin="round"/></svg>
</body></html>
